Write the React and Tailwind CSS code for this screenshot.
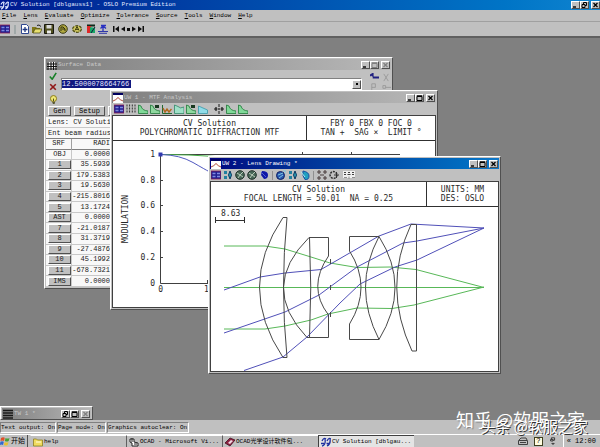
import clsx from 'clsx';

const mono = "font-['Liberation_Mono','Noto_Sans_CJK_SC',monospace]";
const plotFont = "font-['DejaVu_Sans_Mono',monospace]";
const raised = 'border border-t-white border-l-white border-r-[#505050] border-b-[#505050]';
const sunken = 'border border-t-[#808080] border-l-[#808080] border-r-white border-b-white';

const menus = ['File', 'Lens', 'Evaluate', 'Optimize', 'Tolerance', 'Source', 'Tools', 'Window', 'Help'];

const surfaces = [
    ['OBJ', '0.0000'],
    ['1', '35.5939'],
    ['2', '179.5383'],
    ['3', '19.5630'],
    ['4', '-215.8016'],
    ['5', '13.1724'],
    ['AST', '0.0000'],
    ['7', '-21.0187'],
    ['8', '31.3719'],
    ['9', '-27.4876'],
    ['10', '45.1992'],
    ['11', '-678.7321'],
    ['IMS', '0.0000'],
];

function Svg({ children, className = 'size-[10px]' }) {
    return (
        <svg viewBox="0 0 10 10" className={clsx('shrink-0', className)} fill="none" aria-hidden="true">
            {children}
        </svg>
    );
}

const icons = {
    grid: (
        <>
            <path d="M0 1h10v8H0z" fill="#202090" />
            <path d="M1.5 3.5h3M6 3.5h3M1.5 6.5h3M6 6.5h3" stroke="#8088e0" strokeWidth="1.4" />
            <path d="M0 1h10v8H0z" stroke="#902050" strokeWidth="0.8" />
        </>
    ),
    fileNew: (
        <>
            <path d="M1.5.5h5l2 2v7h-7z" fill="#fff" stroke="#304890" />
            <path d="M5 3v5M2.6 5.5h4.8" stroke="#203880" strokeWidth="1.3" />
        </>
    ),
    open: (
        <>
            <path d="M0 3h4l1 1h3v5H0z" fill="#807818" />
            <path d="M1 9l2-4h7L8 9z" fill="#e8e070" stroke="#404010" strokeWidth="0.7" />
            <path d="M5 1.5q2-1.5 4 1" stroke="#202020" />
        </>
    ),
    save: (
        <>
            <path d="M.5.5h9v9h-9z" fill="#505020" stroke="#181810" />
            <path d="M2.5 1h5v3.5h-5z" fill="#d8d8d8" />
            <path d="M3 6.5h4v3H3z" fill="#e8e8e8" />
        </>
    ),
    disc: (
        <>
            <circle cx="5" cy="5" r="4.3" fill="#b0a840" stroke="#3c3c14" />
            <path d="M3 7V3h2l2 2v2M4 5h3" stroke="#303010" />
        </>
    ),
    recycle: (
        <>
            <ellipse cx="5" cy="5" rx="4.4" ry="3.3" fill="#d0c860" stroke="#505018" strokeWidth="1.2" strokeDasharray="3 1" />
            <path d="M3 6.5l2-4 2 4M4 5.4h2.4" stroke="#404010" />
        </>
    ),
    flag: (
        <>
            <path d="M1 .5h8v2H1z" fill="#102818" />
            <path d="M1 2h4v7H1z" fill="#e02828" />
            <path d="M4 3l5 1v5H4z" fill="#18a868" />
            <path d="M5 9l4-6" stroke="#101838" />
        </>
    ),
    upload: (
        <>
            <path d="M5 7V2M2.5 4.5L5 2l3 2.5M3 1.5h5" stroke="#2830c0" strokeWidth="1.3" />
            <path d="M0 7.5h10M1 9.3h8" stroke="#3038a8" />
        </>
    ),
    bars: <path d="M1 .5v9M3.6.5v9M6.3.5v9M9 .5v9" stroke="#303030" strokeDasharray="2 1" />,
    chart: <path d="M.5 1v8.5H10V7Q4 6.5 3 2z" fill="#80d898" stroke="#207838" strokeWidth="0.8" />,
    chartMark: (
        <>
            <path d="M.5 1v8.5H10V7Q4 6.5 3 2z" fill="#90d8a0" stroke="#207838" strokeWidth="0.8" />
            <path d="M5 1h4v3H5z" fill="#183820" />
        </>
    ),
    chartOrange: (
        <>
            <path d="M.5 1v8.5H10" stroke="#206830" />
            <path d="M1 4l2 4 2-3 2 3 2.5-3" stroke="#b06820" strokeWidth="1.4" />
        </>
    ),
    chartPale: <path d="M.5 1v8.5H10V3Q6 5 4 2.5z" fill="#a0e0c8" stroke="#308868" strokeWidth="0.8" />,
    chartBlue: <path d="M.5 2l9 4v3.5h-9z" fill="#90dce8" stroke="#3898a8" strokeWidth="0.8" />,
    split: (
        <>
            <path d="M5 0v3M5 7v3" stroke="#181818" />
            <path d="M0 5h3.5M6.5 5H10M2 3v4M8 3v4M5 4v2" stroke="#181818" strokeWidth="1.2" />
        </>
    ),
    lens: (
        <>
            <path d="M1 1h3v3H1zM1 6h3v3H1z" fill="#2080a0" />
            <path d="M7 1q3 4 0 8-3-4 0-8z" fill="#28a0b8" stroke="#103860" />
        </>
    ),
    globe: (
        <>
            <circle cx="5" cy="5" r="4.3" fill="#486858" stroke="#203028" />
            <path d="M2 3l3 2 3-3M3 8l2-3 3 2" stroke="#b8c8b8" />
        </>
    ),
    blob: (
        <>
            <path d="M3 1q6 0 6 4t-4 4L2 5z" fill="#1018a8" />
            <path d="M2 2l5 5" stroke="#5060d0" />
        </>
    ),
    globeBlue: (
        <>
            <circle cx="4.5" cy="5.5" r="4" fill="#2858b0" stroke="#102060" />
            <path d="M2 5l5-2M3 8l4-3M7 1h3v3" stroke="#80c8e0" />
        </>
    ),
    teal: (
        <>
            <path d="M3 1q6 1 6 5T5 9.5Q2 6 3 1z" fill="#20a0c0" stroke="#1850a0" />
            <path d="M1 2l4 5" stroke="#b0e8f0" />
        </>
    ),
    dots: <path d="M0 2h4M6 2h4M0 8h4M6 8h4M2 0v4M8 0v4M2 6v4M8 6v4M3 5h4" stroke="#4c4040" strokeWidth="1.1" />,
    gear: (
        <>
            <circle cx="4.5" cy="5" r="3.4" stroke="#303030" strokeWidth="1.5" strokeDasharray="2 1" />
            <path d="M5 5h5M7.5 2v6" stroke="#303030" />
        </>
    ),
    logo: (
        <>
            <path d="M1 9q4-1 3-7M6 9q4-2 3-7M1 4q2-4 4-2M6 4q2-4 4-2M0 6.5h3M5.5 6.5H8" stroke="currentColor" strokeWidth="1.3" />
        </>
    ),
    check: <path d="M1 5.5L4 9 9 1" stroke="#188028" strokeWidth="2" />,
    cross: <path d="M1.5 1.5l7 7M8.5 1.5l-7 7" stroke="#901818" strokeWidth="2" />,
    bulb: (
        <>
            <circle cx="5" cy="4" r="3.4" fill="#f0e878" stroke="#807010" />
            <path d="M3.7 8.5h3M4.3 9.6h2M5 7V4" stroke="#404010" />
        </>
    ),
    curve: (
        <>
            <path d="M0 0h10v10H0z" fill="#fff" />
            <path d="M0 0h10v2H0z" fill="#000060" />
            <path d="M0 8Q3 7 5 4.5 7 7 10 8" stroke="#b04838" />
        </>
    ),
    table: (
        <>
            <path d="M0 0h10v10H0z" fill="#fff" />
            <path d="M0 1h10M0 4h10M0 6.5h10M0 9h10M1 2v8M4 2v8M6.5 2v8M9 2v8" stroke="#101010" strokeWidth="1.1" />
        </>
    ),
    list: <path d="M0 1.5h10M0 4h10M0 6.5h10M0 9h10" stroke="#181818" strokeWidth="1.5" />,
    windows: (
        <>
            <path d="M1 2q2-1.5 3.8-.3L4 5Q2.3 4 .5 5z" fill="#e05028" />
            <path d="M5.5 2q2 1 4 0L8.7 5q-2 1-3.8 0z" fill="#48a038" />
            <path d="M.4 5.8Q2 4.8 3.8 5.8L3 9Q1.3 8-.2 9z" fill="#3068d0" />
            <path d="M4.7 6q2 1 3.8 0L7.7 9q-2 1-3.8 0z" fill="#e8c030" />
        </>
    ),
    folder: (
        <>
            <path d="M.5 2h3l1 1h5v6h-9z" fill="#f0dc60" stroke="#908020" strokeWidth="0.8" />
            <path d="M3 5h5" stroke="#fffce0" />
        </>
    ),
    hand: (
        <>
            <path d="M1 2h4v3l4 1v3H3V6L1 5z" fill="#fff" stroke="#202020" />
            <path d="M3 1v4M5 7h3" stroke="#202020" />
        </>
    ),
    book: (
        <>
            <path d="M0 6l5-5 5 2-5 6z" fill="#8c2040" stroke="#401020" strokeWidth="0.8" />
            <path d="M3 6l3-3 2 1-3 3z" fill="#f0d8e0" />
        </>
    ),
    keyboard: (
        <>
            <path d="M1 4l2-2h5l1 2M.5 4.5h9v4h-9z" stroke="#404040" />
            <path d="M2 6.5h6" stroke="#404040" />
        </>
    ),
};

function Caption({ label, children, dim }) {
    return (
        <button type="button" aria-label={label} className={clsx('flex h-[8px] w-[9px] items-center justify-center bg-[#c0c0c0]', raised, dim ? 'text-[#808080]' : 'text-black')}>
            <svg viewBox="0 0 7 6" className="h-[6px] w-[7px]" fill="none" stroke="currentColor" aria-hidden="true">
                {children}
            </svg>
        </button>
    );
}

function Captions({ restore, dim, dimMax, noMin }) {
    return (
        <div className="ml-auto flex shrink-0 items-center">
            {!noMin && (
                <Caption label="Minimize"><path d="M1 5h3" strokeWidth="1.4" /></Caption>
            )}
            {(restore || noMin) && (
                <Caption label="Restore"><path d="M2.5 2V.5h3v3H4M1 2.5h3v3H1z" /></Caption>
            )}
            {!restore && (
                <Caption label="Maximize" dim={dimMax}><path d="M1 1.5h5v4H1zM1 .8h5" /></Caption>
            )}
            <span className="w-[2px]" />
            <Caption label="Close" dim={dim}><path d="M1.5 1l4 4M5.5 1l-4 4" strokeWidth="1.2" /></Caption>
        </div>
    );
}

function ToolButton({ name, icon }) {
    return (
        <button type="button" aria-label={name} className="flex shrink-0 items-center justify-center">
            <Svg>{icons[icon]}</Svg>
        </button>
    );
}

function MdiWindow({ title, icon, active, className, captions, children }) {
    return (
        <section className={clsx('absolute flex flex-col bg-[#c0c0c0] p-px', raised, className)}>
            <header
                className={clsx(
                    'flex h-[11px] shrink-0 items-center bg-linear-to-r px-px text-[6px]',
                    active ? 'from-[#000080] to-[#1078c8] text-white' : 'from-[#808080] to-[#b8b8b8] text-[#c8c8c8]',
                )}
            >
                <Svg>{icons[icon]}</Svg>
                <h2 className="whitespace-nowrap pl-px">{title}</h2>
                <Captions {...captions} />
            </header>
            {children}
        </section>
    );
}

function PlotHeader({ left, right, rightClass }) {
    return (
        <div className={clsx('flex h-[25px] shrink-0 border-b border-[#303030] text-center text-[8px] leading-[9px] whitespace-pre text-[#282828]', plotFont)}>
            <div className="flex flex-1 flex-col justify-center">
                {left.map((line) => <p key={line}>{line}</p>)}
            </div>
            <div className={clsx('flex flex-col justify-center border-l border-[#303030]', rightClass)}>
                {right.map((line) => <p key={line}>{line}</p>)}
            </div>
        </div>
    );
}

function SurfaceData() {
    return (
        <MdiWindow title="Surface Data" icon="table" className="top-[19px] left-[44px] h-[232px] w-[349px]" captions={{ dim: true, dimMax: true }}>
            <div className="flex h-[36px] shrink-0 pl-[3px]">
                <div className="flex flex-col justify-around">
                    <button type="button" aria-label="Accept" className="block"><Svg className="size-[8px]">{icons.check}</Svg></button>
                    <button type="button" aria-label="Cancel" className="block"><Svg className="size-[8px]">{icons.cross}</Svg></button>
                    <button type="button" aria-label="Hint" className="block"><Svg className="size-[9px]">{icons.bulb}</Svg></button>
                </div>
                <div className={clsx('mt-[8px] ml-[3px] flex h-[12px] w-[301px] items-center bg-white', sunken)}>
                    <input aria-label="Cell value" defaultValue="12.5000078664766" className="h-[8px] w-[69px] bg-[#101880] text-[7px] leading-[8px] text-[#e8e8ff]" />
                    <button type="button" aria-label="Show values" className={clsx('ml-auto flex size-[9px] items-center justify-center bg-[#c0c0c0]', raised)}>
                        <span className="size-[2px] bg-black" />
                    </button>
                </div>
                <div className="mt-[3px] ml-[8px] grid h-[18px] grid-cols-2 gap-x-[3px]">
                    <Svg className="size-[9px]"><path d="M0 3l3-2v3M3 5h7" stroke="#202080" strokeWidth="2" /></Svg>
                    <Svg className="size-[9px]"><path d="M2 1l5 8M7 1L2 9" stroke="#989898" /></Svg>
                    <Svg className="size-[9px]"><path d="M2 9V2h4v4H2" stroke="#989898" /></Svg>
                    <Svg className="size-[9px]"><path d="M1 4h3v3H1zM4 6h6" stroke="#989898" /></Svg>
                </div>
            </div>
            <div className="flex h-[11px] shrink-0 gap-[3px] pl-[2px] text-[7px] leading-[7px]">
                <button type="button" className={clsx('h-[10px] w-[23px]', raised)}>Gen</button>
                <button type="button" className={clsx('h-[10px] w-[31px]', raised)}>Setup</button>
                <button type="button" aria-label="Wavelength" className={clsx('h-[10px] w-[31px]', raised)} />
            </div>
            <div className="flex min-h-0 flex-1 flex-col bg-[#f8f8f8] text-[7px] text-[#202020]">
                <p className="h-[11px] border-b border-[#c8c8c8] pl-[2px] leading-[11px]">Lens: CV Soluti</p>
                <p className="h-[11px] border-b border-[#808080] pl-[2px] leading-[11px]">Ent beam radius</p>
                <table className="h-[148px] w-[64px] border-collapse leading-[7px]">
                    <thead>
                        <tr className="h-[10px] border-b border-[#808080]">
                            <th className="w-[26px] border-r border-[#a0a0a0] p-0 font-normal">SRF</th>
                            <th className="p-0 text-right font-normal">RADI</th>
                        </tr>
                    </thead>
                    <tbody>
                        {surfaces.map(([name, radius], i) => (
                            <tr key={name} className="h-[10px] border-b border-[#c8c8c8]">
                                <th className="border-r border-[#c8c8c8] p-0 pl-[2px] font-normal">
                                    {i === 0 ? name : (
                                        <button type="button" className={clsx('block h-[9px] w-[23px] bg-[#c0c0c0] leading-[7px]', raised)}>{name}</button>
                                    )}
                                </th>
                                <td className="p-0 text-right">{radius}</td>
                            </tr>
                        ))}
                    </tbody>
                </table>
            </div>
        </MdiWindow>
    );
}

function MtfAnalysis() {
    const tools = ['grid', 'bars', 'chart', 'chartMark', 'chartOrange', 'chartPale', 'chartMark', 'chartBlue'];
    return (
        <MdiWindow title="UW 1 - MTF Analysis" icon="curve" className="top-[52px] left-[110px] h-[220px] w-[328px]" captions={{}}>
            <div className="flex h-[12px] shrink-0 items-center gap-[2px] pl-[2px]">
                {tools.map((t, i) => <ToolButton key={i} name={`MTF plot ${i + 1}`} icon={t} />)}
                <span className="w-[2px]" />
                <ToolButton name="Split" icon="split" />
                <ToolButton name="Through focus" icon="chart" />
                <ToolButton name="Through frequency" icon="chart" />
            </div>
            <div className="flex min-h-0 flex-1 flex-col border border-[#404040] bg-white">
                <PlotHeader left={['CV Solution', 'POLYCHROMATIC DIFFRACTION MTF']} right={['FBY 0 FBX 0 FOC 0', 'TAN +  SAG ×  LIMIT °']} rightClass="w-[129px]" />
                <svg viewBox="113 141 322 166" className={clsx('block min-h-0 w-full flex-1 text-[8px]', plotFont)} preserveAspectRatio="xMinYMin meet" fill="none">
                    <path d="M160.5 154v129.5H400M160 154.5H400M160 180.5h3M160 205.5h3M160 231.5h3M160 257.5h3M207.5 283v-3M302.5 154v-2M351.5 154v-2" stroke="#404040" />
                    <path d="M161 154.5Q190 154.5 215 156.5H400" stroke="#48b048" />
                    <path d="M161 154.5Q180 155 193 162.5T208 171" stroke="#5058c0" />
                    <path d="M158.5 152.5h4v4h-4z" fill="#3038b0" />
                    <g fill="#282828" textAnchor="end">
                        <text x="155" y="157">1</text>
                        <text x="155" y="183">0.8</text>
                        <text x="155" y="208">0.6</text>
                        <text x="155" y="234">0.4</text>
                        <text x="155" y="260">0.2</text>
                        <text x="155" y="286">0</text>
                        <text x="163" y="292">0</text>
                    </g>
                    <text x="204" y="292" fill="#282828">1</text>
                    <text x="128" y="243" transform="rotate(-90 128 243)" fill="#282828">MODULATION</text>
                </svg>
            </div>
        </MdiWindow>
    );
}

function LensDrawing() {
    return (
        <MdiWindow title="UW 2 - Lens Drawing *" icon="curve" active className="top-[118px] left-[208px] h-[218px] w-[293px]" captions={{}}>
            <div className="flex h-[12px] shrink-0 items-center gap-[2px] pl-px">
                <ToolButton name="Graphics window" icon="grid" />
                <ToolButton name="Plan view" icon="lens" />
                <ToolButton name="Wire frame" icon="globe" />
                <ToolButton name="Solid view" icon="globe" />
                <ToolButton name="Shaded view" icon="blob" />
                <span className="mx-px h-[9px] w-px bg-[#909090]" />
                <ToolButton name="Rotate" icon="globeBlue" />
                <ToolButton name="Zone" icon="lens" />
                <ToolButton name="Element" icon="teal" />
                <span className="mx-px h-[9px] w-px bg-[#909090]" />
                <ToolButton name="Operands" icon="dots" />
                <ToolButton name="Conditions" icon="gear" />
                <button type="button" aria-label="Exit" className="ml-[2px] h-[9px] w-[13px]">
                    <svg viewBox="0 0 13 9" className="h-[9px] w-[13px]" fill="none" aria-hidden="true">
                        <path d="M0 0h12v7H0z" fill="#f0f0f0" />
                        <path d="M1 1.5h2M5 1.5h2M9 1.5h2M1 3.5h2M4.5 3.5h3M9 3.5h2" stroke="#404040" />
                        <path d="M1 6.5h3M6 5.5v2.5M9 6.5h3" stroke="#909090" />
                    </svg>
                </button>
            </div>
            <div className="flex min-h-0 flex-1 flex-col border border-[#404040] bg-white">
                <PlotHeader left={['CV Solution', 'FOCAL LENGTH = 50.01  NA = 0.25']} right={['UNITS: MM', 'DES: OSLO']} rightClass="w-[72px]" />
                <svg viewBox="211 207 287 164" className={clsx('block min-h-0 w-full flex-1 text-[8px]', plotFont)} preserveAspectRatio="xMinYMin meet" fill="none">
                    <text x="221" y="216" fill="#282828">8.63</text>
                    <path d="M215.5 217v6M244.5 217v6M215.5 220.5h29" stroke="#303030" />
                    <g stroke="#58b858">
                        <path d="M224 287.5H484" />
                        <path d="M224 246h41l20 3 26 8 19 6 27 4.5 33-.5 26 2.5 68 18" />
                        <path d="M224 329h41l20-3 26-6 17-6 29-6 35 .5 22-3.5 70-18" />
                    </g>
                    <g stroke="#5050b8">
                        <path d="M224 290l36-13 25-4 36-3.5 20-11.5 38-22 32-12 73 4" />
                        <path d="M224 333l61-21 34-17 38-28 46-24 14-2 67-13" />
                        <path d="M244 370.5l39-13.5 24-20 33-34 20-19 35-17 22-7 67-32" />
                    </g>
                    <g stroke="#484848">
                        <path d="M283 217.5Q236 287 283 357.5h4Q280 287 287 217.5z" />
                        <path d="M309 237.5Q259 287 307 337.5h21.5V315Q307 287 328.5 256v-18.5z" />
                        <path d="M309.5 237.5q2.5 50 0 100" />
                        <path d="M349.5 236.5H379Q352 287 379 339.5h-29.5V324q23-37 0-73z" />
                        <path d="M379 236.5Q411 287 379 339.5" />
                        <path d="M411 224.500h5.500V351H412Q382 287 411 224.500z" />
                        <path d="M330.500 259v5M330.500 285v5M330.500 312v5" />
                    </g>
                </svg>
            </div>
        </MdiWindow>
    );
}

function Task({ icon, active, children, className }) {
    return (
        <button
            type="button"
            className={clsx('flex h-[12px] w-[96px] shrink-0 items-center gap-px border-t border-l pl-[2px] whitespace-nowrap', active ? 'border-[#404040] bg-[#e4e4e4]' : 'border-t-white border-l-[#606060]', className)}
        >
            <span className={clsx(active && 'text-[#2030a0]')}><Svg>{icons[icon]}</Svg></span>
            <span>{children}</span>
        </button>
    );
}

export default function App() {
    return (
        <div className={clsx('relative flex h-screen flex-col overflow-hidden bg-[#c0c0c0] text-[6px] leading-[8px] text-black', mono)}>
            <header className="flex h-[10px] shrink-0 items-center bg-linear-to-r from-[#001890] to-[#1084d0] text-[#e0e8ff]">
                <Svg className="size-[9px]">{icons.logo}</Svg>
                <h1 className="pl-px whitespace-nowrap">CV Solution [dblgauss1] - OSLO Premium Edition</h1>
                <Captions restore />
            </header>
            <nav className="flex h-[12px] shrink-0 items-center gap-[7px] border-b border-[#a0a0a0] px-[2px]">
                {menus.map((m) => (
                    <button type="button" key={m}><span className="underline">{m[0]}</span>{m.slice(1)}</button>
                ))}
            </nav>
            <div className="flex h-[16px] shrink-0 items-center gap-[2px] border-b-2 border-[#606060]">
                <ToolButton name="Setup window" icon="grid" />
                <span className="mx-[2px] h-[9px] w-[2px] bg-[#a0a8a8]" />
                <ToolButton name="New lens" icon="fileNew" />
                <ToolButton name="Open lens" icon="open" />
                <ToolButton name="Save lens" icon="save" />
                <span />
                <ToolButton name="Lens database" icon="disc" />
                <span />
                <ToolButton name="Private catalog" icon="recycle" />
                <span />
                <ToolButton name="Slider wheel" icon="flag" />
                <ToolButton name="Edit lens" icon="upload" />
                <svg viewBox="0 0 32 8" className="ml-[3px] h-[8px] w-[32px]" aria-hidden="true">
                    <path d="M0 1h1.5v6H0zM6 1v6L2 4zM12 1.500v5L8 4zM14 3h3v3h-3zM19 1.500v5L23 4zM25 1v6l4-3zM29.500 1H31v6h-1.500z" fill="#101010" />
                </svg>
            </div>

            <main className="relative min-h-0 flex-1 bg-[#808080]">
                <SurfaceData />
                <MtfAnalysis />
                <LensDrawing />
                <MdiWindow title="TW 1 *" icon="list" className="bottom-0 left-0 h-[14px] w-[93px]" captions={{ noMin: true, dim: true }} />
            </main>

            <div className="flex h-[14px] shrink-0 items-center gap-px">
                <p className={clsx('h-[11px] w-[56px] leading-[10px] whitespace-nowrap', sunken)}>Text output: On</p>
                <p className={clsx('h-[11px] w-[49px] leading-[10px] whitespace-nowrap', sunken)}>Page mode: On</p>
                <p className={clsx('h-[11px] w-[82px] leading-[10px] whitespace-nowrap', sunken)}>Graphics autoclear: On</p>
            </div>
            <footer className="flex h-[13px] shrink-0 items-center border-t border-white">
                <button type="button" className="mr-[2px] flex h-[12px] w-[28px] shrink-0 items-center gap-px border-r border-[#505050] text-[7px] whitespace-nowrap">
                    <Svg>{icons.windows}</Svg>
                    开始
                </button>
                <Task icon="folder" className="border-l-transparent">help</Task>
                <Task icon="hand">OCAD - Microsoft Vi...</Task>
                <Task icon="book">OCAD光学设计软件包...</Task>
                <Task icon="logo" active>CV Solution [dblgau...</Task>
                <div className="ml-auto flex shrink-0 items-center gap-[6px] pr-[4px]">
                    <Svg>{icons.keyboard}</Svg>
                    <span className="flex size-[9px] items-center justify-center border border-[#404020] bg-[#fffce0] text-[7px]">?</span>
                    <Svg className="size-[8px]"><path d="M3 3V1h4v3H5M2 3h3v2H2zM3.500 8h3L5 9.500z" stroke="#202020" /></Svg>
                    <p className="flex h-[12px] items-center gap-[4px] border-l border-white pl-[3px] text-[7px]">
                        <span>«</span>12:00
                    </p>
                </div>
            </footer>

            <div className="pointer-events-none absolute right-[12px] bottom-[14px] flex flex-col items-end font-['Noto_Sans_CJK_SC',sans-serif] whitespace-nowrap text-white">
                <p className="pr-[3px] text-[18px] leading-[18px] [text-shadow:1px_1px_1px_#808080]">知乎 @软服之家</p>
                <p className="-mt-[10px] text-[15px] leading-[15px] [text-shadow:1px_1px_0_#303030]">头条 @软服之家</p>
            </div>
        </div>
    );
}
